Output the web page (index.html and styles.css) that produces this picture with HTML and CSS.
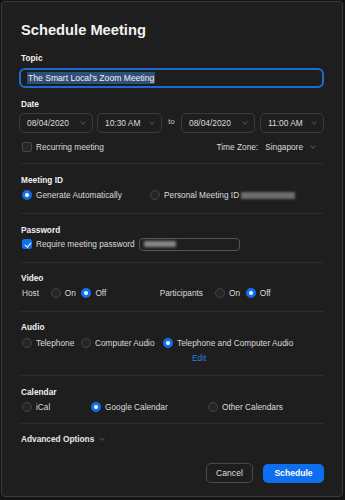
FILE: index.html
```html
<!DOCTYPE html>
<html>
<head>
<meta charset="utf-8">
<link rel="stylesheet" href="styles.css">
</head>
<body>
<div class="window">
  <h1 class="title">Schedule Meeting</h1>

  <div class="label label-topic">Topic</div>
  <div class="topic-input"><span class="sel">The Smart Local's Zoom Meeting</span></div>

  <div class="label label-date">Date</div>
  <div class="date-row">
    <div class="select s-date"><span>08/04/2020</span><span class="chev"></span></div>
    <div class="select s-time"><span>10:30 AM</span><span class="chev"></span></div>
    <span class="to">to</span>
    <div class="select s-date"><span>08/04/2020</span><span class="chev"></span></div>
    <div class="select s-time2"><span>11:00 AM</span><span class="chev"></span></div>
  </div>
  <div class="recur-row">
    <span class="opt"><span class="check"></span>Recurring meeting</span>
    <span class="tz"><span class="tz-label">Time Zone:</span><span class="tz-val">Singapore</span><span class="chev"></span></span>
  </div>

  <div class="sep sep-1"></div>

  <div class="label label-sec">Meeting ID</div>
  <div class="row row-id">
    <span class="opt"><span class="radio on"></span>Generate Automatically</span>
    <span class="opt"><span class="radio"></span>Personal Meeting ID <span class="blur-id"></span></span>
  </div>

  <div class="sep sep-2"></div>

  <div class="label label-sec">Password</div>
  <div class="row row-pw">
    <span class="opt"><span class="check on"></span>Require meeting password</span>
    <div class="pw-input"><span class="blur-pw"></span></div>
  </div>

  <div class="sep sep-3"></div>

  <div class="label label-sec2">Video</div>
  <div class="row row-video">
    <span class="host">Host</span>
    <span class="opt o-on"><span class="radio"></span>On</span>
    <span class="opt o-off"><span class="radio on"></span>Off</span>
    <span class="parts">Participants</span>
    <span class="opt o-on"><span class="radio"></span>On</span>
    <span class="opt o-off"><span class="radio on"></span>Off</span>
  </div>

  <div class="sep sep-4"></div>

  <div class="label label-sec2">Audio</div>
  <div class="row row-audio">
    <span class="opt a-tel"><span class="radio"></span>Telephone</span>
    <span class="opt a-comp"><span class="radio"></span>Computer Audio</span>
    <span class="opt"><span class="radio on"></span>Telephone and Computer Audio</span>
  </div>
  <div class="edit">Edit</div>

  <div class="sep sep-5"></div>

  <div class="label label-sec">Calendar</div>
  <div class="row row-cal">
    <span class="opt c-ical"><span class="radio"></span>iCal</span>
    <span class="opt c-google"><span class="radio on"></span>Google Calendar</span>
    <span class="opt"><span class="radio"></span>Other Calendars</span>
  </div>

  <div class="sep sep-6"></div>

  <div class="advanced">Advanced Options <span class="chev"></span></div>

  <div class="buttons">
    <button class="btn cancel">Cancel</button>
    <button class="btn schedule">Schedule</button>
  </div>
</div>
</body>
</html>
```

FILE: styles.css
```css
html, body {
  margin: 0;
  padding: 0;
  background: #141414;
}
body {
  font-family: "Liberation Sans", Arial, sans-serif;
  font-size: 8.3px;
  color: #dcdcdc;
}
.window {
  box-sizing: border-box;
  margin: 1px;
  width: 342px;
  height: 496px;
  background: #1e1e1e;
  border: 1px solid #393939;
  border-radius: 4px;
  padding: 19px 18px 0 17px;
}
.title {
  margin: 0;
  font-size: 14.7px;
  line-height: 18px;
  font-weight: bold;
  color: #f2f2f2;
  padding-left: 2px;
}
.label {
  font-weight: bold;
  color: #f0f0f0;
  line-height: 12px;
  height: 12px;
  padding-left: 2px;
}
.label-topic { margin-top: 13px; }
.label-date { margin-top: 10px; }
.label-sec { margin-top: 10px; }
.label-sec2 { margin-top: 9px; }

.topic-input {
  box-sizing: border-box;
  margin-top: 4px;
  height: 20px;
  border: 2px solid #1c6bd0;
  border-radius: 6px;
  padding: 0 6px;
  display: flex;
  align-items: center;
  font-size: 8.6px;
  color: #f4f4f4;
}
.sel {
  background: #2f4e78;
  line-height: 12px;
  padding: 0 1px;
}

.date-row {
  margin-top: 3px;
  display: flex;
  align-items: center;
  height: 20px;
}
.select {
  box-sizing: border-box;
  height: 20px;
  border: 1px solid #3a3a3a;
  border-radius: 5px;
  display: flex;
  align-items: center;
  justify-content: space-between;
  padding: 0 7px 0 7px;
  font-size: 8.4px;
  color: #dcdcdc;
}
.s-date { width: 74px; }
.s-time { width: 65px; margin-left: 4px; }
.s-time2 { width: 64px; margin-left: 5px; }
.to {
  width: 19px;
  text-align: center;
  font-size: 7.5px;
  color: #cfcfcf;
  padding-bottom: 3px;
}
.chev {
  display: inline-block;
  width: 3px;
  height: 3px;
  border-right: 1px solid #4e4e4e;
  border-bottom: 1px solid #4e4e4e;
  transform: rotate(45deg);
  margin-bottom: 2px;
}

.recur-row {
  margin-top: 8px;
  height: 12px;
  display: flex;
  align-items: center;
  justify-content: space-between;
  padding-left: 3px;
  padding-right: 9px;
}
.tz { display: flex; align-items: center; }
.tz-val { margin-left: 7px; margin-right: 8px; }

.sep {
  height: 1px;
  background: #2c2c2c;
  margin-left: 2px;
}
.sep-1 { margin-top: 10px; }
.sep-2 { margin-top: 12px; }
.sep-3 { margin-top: 11px; }
.sep-4 { margin-top: 12px; }
.sep-5 { margin-top: 11px; }
.sep-6 { margin-top: 10px; }

.row {
  display: flex;
  align-items: center;
  height: 12px;
  margin-top: 3px;
  padding-left: 3px;
}
.opt {
  display: inline-flex;
  align-items: center;
  white-space: nowrap;
}
.radio {
  box-sizing: border-box;
  width: 10px;
  height: 10px;
  border-radius: 50%;
  border: 1px solid #444;
  background: #262626;
  margin-right: 4px;
  flex: none;
}
.radio.on {
  border: 3px solid #0f6ff0;
  background: #ffffff;
}
.check {
  box-sizing: border-box;
  width: 10px;
  height: 10px;
  border-radius: 2px;
  border: 1px solid #474747;
  background: #262626;
  margin-right: 4px;
  flex: none;
  position: relative;
}
.check.on {
  background: #0f6ff0;
  border-color: #0f6ff0;
}
.check.on::after {
  content: "";
  position: absolute;
  left: 2.5px;
  top: 0.5px;
  width: 2.5px;
  height: 5px;
  border-right: 1.3px solid #fff;
  border-bottom: 1.3px solid #fff;
  transform: rotate(40deg);
}

.row-id .opt:first-child { width: 128px; }
.blur-id {
  display: inline-block;
  width: 54px;
  height: 7px;
  margin-left: 2px;
  background: #6c6c6c;
  filter: blur(1.2px);
}

.row-pw { height: 14px; margin-top: 1px; }
.row-pw .opt { width: 117px; }
.pw-input {
  box-sizing: border-box;
  width: 101px;
  height: 13px;
  border: 1px solid #555;
  border-radius: 4px;
  display: flex;
  align-items: center;
  padding-left: 4px;
}
.blur-pw {
  display: inline-block;
  width: 32px;
  height: 6px;
  background: #8a8a8a;
  filter: blur(1.4px);
}

.host { width: 29px; }
.o-on { width: 31px; }
.o-off { width: 79px; }
.parts { width: 56px; }

.row-audio { margin-top: 4px; }
.a-tel { width: 59px; }
.a-comp { width: 82px; }
.edit {
  margin-top: 3px;
  height: 12px;
  line-height: 12px;
  padding-left: 173px;
  color: #2d7ee0;
  font-size: 8.3px;
}

.c-ical { width: 69px; }
.c-google { width: 117px; }

.advanced {
  margin-top: 9px;
  height: 12px;
  line-height: 12px;
  font-weight: bold;
  color: #e8e8e8;
  padding-left: 2px;
  display: flex;
  align-items: center;
}
.advanced .chev { margin-left: 6px; border-color: #4a4a4a; }

.buttons {
  margin-top: 18px;
  display: flex;
  justify-content: flex-end;
  align-items: center;
  gap: 10px;
}
.btn {
  box-sizing: border-box;
  font-family: "Liberation Sans", Arial, sans-serif;
  font-size: 8.6px;
  border-radius: 5px;
  height: 20px;
  padding: 0;
  cursor: pointer;
}
.cancel {
  width: 47px;
  background: #1e1e1e;
  border: 1px solid #4a4a4a;
  color: #dedede;
}
.schedule {
  width: 61px;
  height: 19px;
  background: #0e6ef0;
  border: none;
  color: #fff;
  font-weight: bold;
}
```
